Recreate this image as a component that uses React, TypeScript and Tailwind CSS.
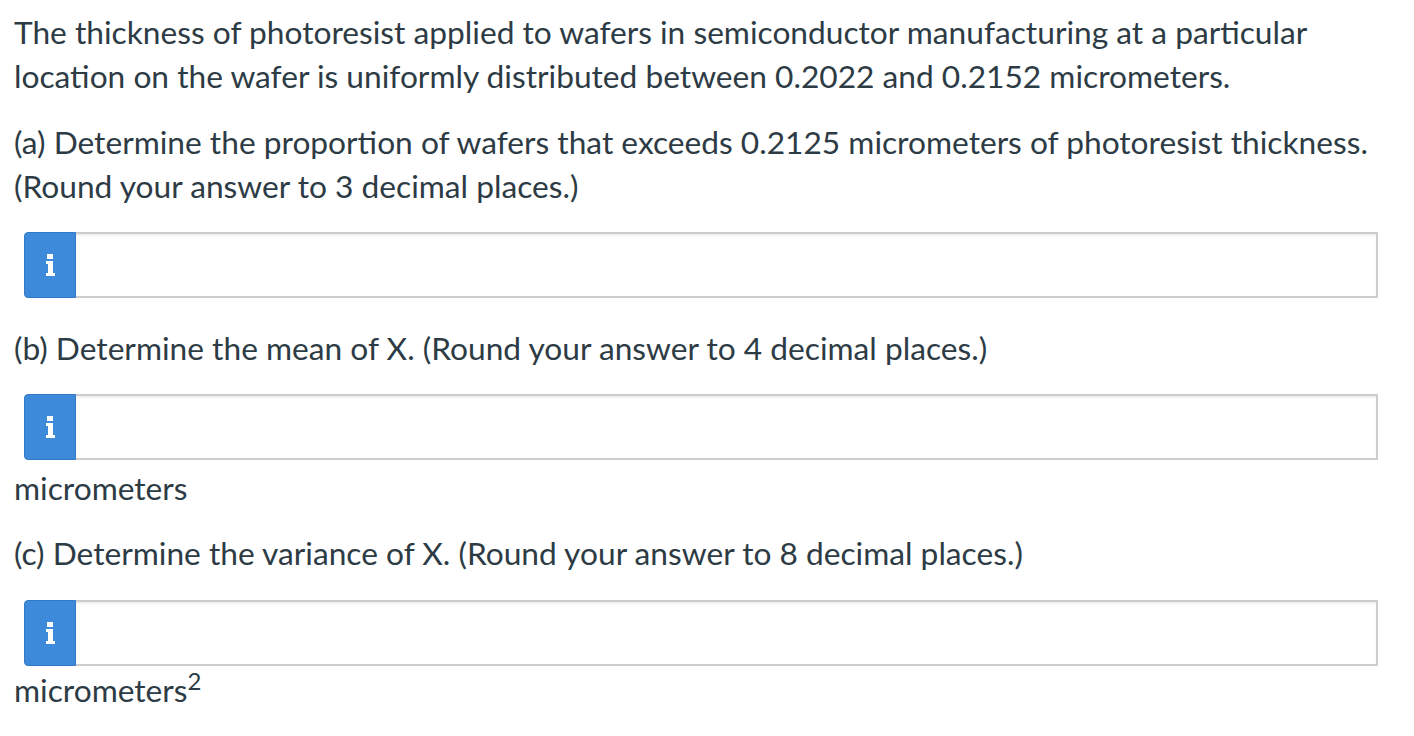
import React from "react";

function InfoIcon() {
  return (
    <svg width="12" height="22" viewBox="0 0 12 22" fill="#ffffff">
      <rect x="2" y="0" width="6" height="5" />
      <path d="M1 7 H8 V19 H10 V22 H1 V19 H3 V10 H1 Z" />
    </svg>
  );
}

function AnswerBox() {
  return (
    <div className="flex h-[66px] mr-[36px] ml-[24px]">
      <div className="w-[52px] shrink-0 flex items-center justify-center pl-[2px] bg-[#3d8ada] border border-[#3479c4] rounded-l-[4px]">
        <InfoIcon />
      </div>
      <div className="flex-1 border-2 border-l-0 border-[#cccccc] bg-white shadow-[inset_0_2px_2px_rgba(0,0,0,0.06)]"></div>
    </div>
  );
}

export default function App() {
  return (
    <div
      className="w-[1414px] h-[736px] bg-white text-[#2d3b45] text-[31.7px] leading-[44px] overflow-hidden"
      style={{ fontFamily: "Lato, 'Open Sans', sans-serif" }}
    >
      <div className="pt-[10px]">
        <p className="pl-[14px]">
          The thickness of photoresist applied to wafers in semiconductor manufacturing at a particular
          <br />
          location on the wafer is uniformly distributed between 0.2022 and 0.2152 micrometers.
        </p>
        <p className="pl-[14px] mt-[22px]">
          (a) Determine the proportion of wafers that exceeds 0.2125 micrometers of photoresist thickness.
          <br />
          (Round your answer to 3 decimal places.)
        </p>
        <div className="mt-[24px]">
          <AnswerBox />
        </div>
        <p className="pl-[14px] mt-[28px]">
          (b) Determine the mean of X. (Round your answer to 4 decimal places.)
        </p>
        <div className="mt-[24px]">
          <AnswerBox />
        </div>
        <p className="pl-[14px] mt-[6px]">micrometers</p>
        <p className="pl-[14px] mt-[21px]">
          (c) Determine the variance of X. (Round your answer to 8 decimal places.)
        </p>
        <div className="mt-[25px]">
          <AnswerBox />
        </div>
        <p className="pl-[14px] mt-[2px]">
          micrometers<sup className="text-[24px] leading-none">2</sup>
        </p>
      </div>
    </div>
  );
}
